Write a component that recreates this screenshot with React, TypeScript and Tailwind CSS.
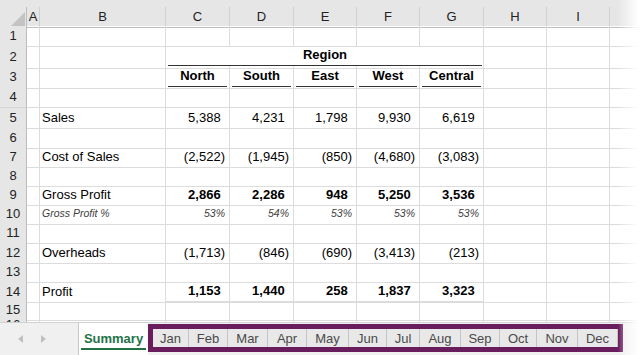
import clsx from "clsx";

type Line = {
  n: number;
  h: string;
  label?: string;
  values?: string[];
  bold?: boolean;
  pct?: boolean;
  heads?: string[];
  region?: boolean;
  rule?: "single" | "double";
};

const COLS =
  "grid grid-cols-[27px_13px_126px_64px_64px_63px_63px_64px_63px_63px_1fr]";
const GRID = "border-r border-b border-r-[#dcdcdc] border-b-[#dcdcdc]";
const LETTERS = ["A", "B", "C", "D", "E", "F", "G", "H", "I", ""];

const LINES: Line[] = [
  { n: 1, h: "h-[19px]" },
  { n: 2, h: "h-[21px]", region: true },
  { n: 3, h: "h-[21px]", heads: ["North", "South", "East", "West", "Central"] },
  { n: 4, h: "h-[21px]" },
  {
    n: 5,
    h: "h-[20px]",
    label: "Sales",
    values: ["5,388", "4,231", "1,798", "9,930", "6,619"],
  },
  { n: 6, h: "h-[19px]" },
  {
    n: 7,
    h: "h-[19px]",
    label: "Cost of Sales",
    values: ["(2,522)", "(1,945)", "(850)", "(4,680)", "(3,083)"],
  },
  { n: 8, h: "h-[19px]", rule: "single" },
  {
    n: 9,
    h: "h-[19px]",
    label: "Gross Profit",
    values: ["2,866", "2,286", "948", "5,250", "3,536"],
    bold: true,
    rule: "single",
  },
  {
    n: 10,
    h: "h-[19px]",
    label: "Gross Profit %",
    values: ["53%", "54%", "53%", "53%", "53%"],
    pct: true,
  },
  { n: 11, h: "h-[20px]" },
  {
    n: 12,
    h: "h-[19px]",
    label: "Overheads",
    values: ["(1,713)", "(846)", "(690)", "(3,413)", "(213)"],
  },
  { n: 13, h: "h-[19px]", rule: "single" },
  {
    n: 14,
    h: "h-[19px]",
    label: "Profit",
    values: ["1,153", "1,440", "258", "1,837", "3,323"],
    bold: true,
    rule: "double",
  },
  { n: 15, h: "h-[20px]" },
  { n: 16, h: "h-[19px]" },
];

const MONTHS = [
  { name: "Jan", w: "w-[36px]" },
  { name: "Feb", w: "w-[39px]" },
  { name: "Mar", w: "w-[40px]" },
  { name: "Apr", w: "w-[39px]" },
  { name: "May", w: "w-[42px]" },
  { name: "Jun", w: "w-[38px]" },
  { name: "Jul", w: "w-[33px]" },
  { name: "Aug", w: "w-[41px]" },
  { name: "Sep", w: "w-[39px]" },
  { name: "Oct", w: "w-[37px]" },
  { name: "Nov", w: "w-[41px]" },
  { name: "Dec", w: "w-[40px]" },
];

const ValueCell = ({ line, value }: { line: Line; value?: string }) => {
  const ruleCls =
    line.rule === "single"
      ? "border-b-[#404040]"
      : line.rule === "double"
        ? "border-b-2 border-b-[#4a4a4a]"
        : "";
  const negative = value?.startsWith("(");

  return (
    <div
      className={clsx(
        GRID,
        ruleCls,
        "flex items-center justify-end whitespace-nowrap pr-[4px]",
        line.bold && "font-bold",
        line.pct && "text-[10.5px] italic text-[#404040]"
      )}
    >
      {value}
      {value && !negative && !line.pct ? (
        <span className="invisible">)</span>
      ) : null}
    </div>
  );
};

const SheetRow = ({ line }: { line: Line }) => {
  // the last row is cut by the tab strip, so its number sits at the top
  const cut = line.n === 16;

  return (
    <div className={clsx(COLS, line.h)}>
      <div
        className={clsx(
          "flex justify-center border-r border-b border-r-[#bdbdbd] border-b-[#d3d3d3] bg-[#e6e6e6] text-[#222]",
          cut ? "items-start leading-[9px]" : "items-center"
        )}
      >
        {line.n}
      </div>
      <div className={GRID} />
      <div
        className={clsx(
          GRID,
          "flex items-center whitespace-nowrap pl-[2px]",
          line.pct && "text-[10.5px] italic text-[#404040]"
        )}
      >
        {line.label}
      </div>

      {line.region ? (
        <div className={clsx(GRID, "col-span-5 flex")}>
          <div className="mb-[2px] ml-[2px] mr-[1px] flex flex-1 items-center justify-center border-b border-[#333] font-bold">
            Region
          </div>
        </div>
      ) : line.heads ? (
        line.heads.map((head) => (
          <div key={head} className={clsx(GRID, "flex")}>
            <div className="mx-[2px] mb-[1px] flex flex-1 items-center justify-center border-b border-[#333] font-bold">
              {head}
            </div>
          </div>
        ))
      ) : (
        [0, 1, 2, 3, 4].map((i) => (
          <ValueCell key={i} line={line} value={line.values?.[i]} />
        ))
      )}

      <div className={GRID} />
      <div className={GRID} />
      <div className={GRID} />
    </div>
  );
};

export default function App() {
  return (
    <div className="relative flex h-[355px] w-[644px] flex-col overflow-hidden bg-white font-['Liberation_Sans',Arial,sans-serif] text-[13px] text-black">
      <div className="h-[323px] overflow-hidden">
        {/* column headers */}
        <div className={clsx(COLS, "h-[26px] bg-[#e6e6e6] text-[#222]")}>
          <div className="flex border-b border-[#bdbdbd]">
            <div className="mt-[7px] flex flex-1 items-end justify-end border-r border-[#bdbdbd] pb-[1px] pr-[1px]">
              <svg width="14" height="14" viewBox="0 0 14 14">
                <polygon points="14,0 14,14 0,14" fill="#c3c3c3" />
              </svg>
            </div>
          </div>
          {LETTERS.map((letter, idx) => (
            <div key={idx} className="flex border-b border-[#bdbdbd]">
              <div className="mt-[7px] flex flex-1 items-center justify-center border-r border-[#d0d0d0]">
                {letter}
              </div>
            </div>
          ))}
        </div>

        {LINES.map((line) => (
          <SheetRow key={line.n} line={line} />
        ))}
      </div>

      {/* sheet tabs */}
      <div className="flex flex-1 border-t border-[#d2d2d2] bg-[#f0f0f0]">
        <div className="flex w-[78px] items-center gap-[18px] pl-[18px] pt-[1px]">
          <svg width="5" height="8" viewBox="0 0 5 8">
            <polygon points="5,0 0,4 5,8" fill="#c0c0c0" />
          </svg>
          <svg width="5" height="8" viewBox="0 0 5 8">
            <polygon points="0,0 5,4 0,8" fill="#c0c0c0" />
          </svg>
        </div>
        <div className="flex w-[70px] border-l border-[#c8c8c8] bg-white">
          <div className="mx-[2px] mb-[5px] flex flex-1 items-center justify-center border-b-2 border-[#217346] pt-[6px] font-bold text-[#217346]">
            Summary
          </div>
        </div>
        <div className="mt-[1px] flex h-[28px] self-start border-[5px] border-[#6a1d5d] bg-[#e8e8e8]">
          {MONTHS.map((m) => (
            <div
              key={m.name}
              className={clsx(
                m.w,
                "flex items-center justify-center border-r border-[#c4c4c4] pt-[2px] text-[#4a4a4a]"
              )}
            >
              {m.name}
            </div>
          ))}
        </div>
      </div>

      {/* soft right edge */}
      <div className="pointer-events-none absolute inset-y-0 right-0 w-[26px] bg-linear-to-r from-white/0 to-white to-80%" />
    </div>
  );
}
